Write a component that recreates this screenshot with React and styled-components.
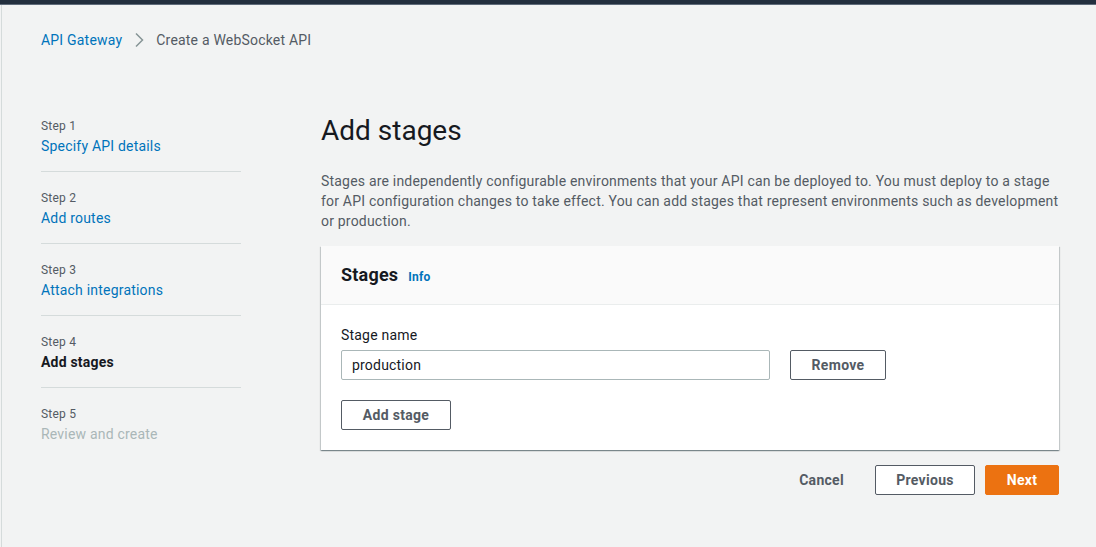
import React from "react";
import styled, { createGlobalStyle } from "styled-components";

const GlobalStyle = createGlobalStyle`
  html, body {
    margin: 0;
    padding: 0;
    background: #f2f3f3;
    font-family: Roboto, "Open Sans", "Liberation Sans", sans-serif;
    color: #16191f;
    font-size: 14px;
    letter-spacing: 0.2px;
  }
`;

const TopBar = styled.div`
  height: 4px;
  background: #232f3e;
  border-bottom: 1px solid #5f6b7a;
`;

const Shell = styled.div`
  margin-left: 1px;
  border-left: 1px solid #d5dbdb;
  min-height: 542px;
  padding: 25px 0 0 39px;
  box-sizing: border-box;
`;

const Breadcrumbs = styled.nav`
  display: flex;
  align-items: center;
  gap: 9px;
  line-height: 20px;
`;

const Crumb = styled.span`
  color: ${(p) => (p.$link ? "#0073bb" : "#545b64")};
`;

const Layout = styled.div`
  display: grid;
  grid-template-columns: 200px 738px;
  column-gap: 80px;
  margin-top: 50px;
`;

const StepList = styled.ol`
  list-style: none;
  margin: 0;
  padding: 0;
`;

const StepItem = styled.li`
  padding: 18px 0 15px;
  border-top: 1px solid #d5dbdb;
  display: flex;
  flex-direction: column;
  gap: 2px;

  &:first-child {
    border-top: none;
  }
`;

const StepLabel = styled.span`
  font-size: 12px;
  line-height: 16px;
  color: #545b64;
`;

const StepName = styled.span`
  font-size: 14px;
  line-height: 20px;
  color: ${(p) =>
    p.$state === "current" ? "#16191f" : p.$state === "disabled" ? "#aab7b8" : "#0073bb"};
  font-weight: ${(p) => (p.$state === "current" ? 700 : 400)};
`;

const Main = styled.main`
  display: flex;
  flex-direction: column;
  padding-top: 13px;
`;

const Title = styled.h1`
  margin: 0;
  font-size: 28px;
  line-height: 36px;
  font-weight: 400;
  letter-spacing: 0;
  color: #16191f;
`;

const Description = styled.p`
  margin: 22px 0 0;
  font-size: 14px;
  line-height: 20px;
  color: #545b64;
`;

const Container = styled.section`
  margin-top: 15px;
  background: #fff;
  box-shadow: 0 1px 1px 0 rgba(0, 28, 36, 0.3), 1px 1px 1px 0 rgba(0, 28, 36, 0.15),
    -1px 1px 1px 0 rgba(0, 28, 36, 0.15);
`;

const ContainerHeader = styled.header`
  display: flex;
  align-items: baseline;
  gap: 10px;
  padding: 18px 20px;
  background: #fafafa;
  border-bottom: 1px solid #eaeded;
`;

const ContainerTitle = styled.h2`
  margin: 0;
  font-size: 18px;
  line-height: 22px;
  font-weight: 700;
`;

const InfoLink = styled.span`
  font-size: 12px;
  font-weight: 700;
  color: #0073bb;
`;

const ContainerBody = styled.div`
  padding: 19px 20px 20px;
  display: flex;
  flex-direction: column;
  align-items: flex-start;
`;

const FieldLabel = styled.label`
  font-size: 14px;
  line-height: 22px;
  margin-bottom: 4px;
`;

const FieldRow = styled.div`
  display: flex;
  gap: 20px;
  margin-bottom: 20px;
`;

const TextInput = styled.input`
  width: 429px;
  height: 30px;
  box-sizing: border-box;
  padding: 0 10px;
  border: 1px solid #aab7b8;
  border-radius: 2px;
  font: inherit;
  font-size: 14px;
  letter-spacing: 0.2px;
  color: #16191f;
  background: #fff;
`;

const Button = styled.button`
  height: 30px;
  box-sizing: border-box;
  width: ${(p) => p.$width || "auto"};
  padding: 0 20px;
  font-family: inherit;
  font-size: 14px;
  font-weight: 700;
  letter-spacing: 0.3px;
  border-radius: 2px;
  cursor: pointer;
  border: 1px solid ${(p) => (p.$variant === "primary" ? "#ec7211" : p.$variant === "link" ? "transparent" : "#545b64")};
  background: ${(p) => (p.$variant === "primary" ? "#ec7211" : p.$variant === "link" ? "transparent" : "#fff")};
  color: ${(p) => (p.$variant === "primary" ? "#fff" : "#545b64")};
`;

const Actions = styled.div`
  display: flex;
  justify-content: flex-end;
  align-items: center;
  gap: 10px;
  margin-top: 15px;
`;

const Chevron = () => (
  <svg width="16" height="16" viewBox="0 0 16 16" fill="none">
    <path d="M5 1.5l6.5 6.5L5 14.5" stroke="#879596" strokeWidth="1.5" />
  </svg>
);

const steps = [
  { n: 1, name: "Specify API details", state: "done" },
  { n: 2, name: "Add routes", state: "done" },
  { n: 3, name: "Attach integrations", state: "done" },
  { n: 4, name: "Add stages", state: "current" },
  { n: 5, name: "Review and create", state: "disabled" },
];

export default function App() {
  return (
    <>
      <GlobalStyle />
      <TopBar />
      <Shell>
        <Breadcrumbs>
          <Crumb $link>API Gateway</Crumb>
          <Chevron />
          <Crumb>Create a WebSocket API</Crumb>
        </Breadcrumbs>
        <Layout>
          <StepList>
            {steps.map((s) => (
              <StepItem key={s.n}>
                <StepLabel>Step {s.n}</StepLabel>
                <StepName $state={s.state}>{s.name}</StepName>
              </StepItem>
            ))}
          </StepList>
          <Main>
            <Title>Add stages</Title>
            <Description>
              Stages are independently configurable environments that your API can be deployed to. You must deploy to a stage
              for API configuration changes to take effect. You can add stages that represent environments such as development
              or production.
            </Description>
            <Container>
              <ContainerHeader>
                <ContainerTitle>Stages</ContainerTitle>
                <InfoLink>Info</InfoLink>
              </ContainerHeader>
              <ContainerBody>
                <FieldLabel>Stage name</FieldLabel>
                <FieldRow>
                  <TextInput defaultValue="production" />
                  <Button $width="96px">Remove</Button>
                </FieldRow>
                <Button $width="110px">Add stage</Button>
              </ContainerBody>
            </Container>
            <Actions>
              <Button $variant="link">Cancel</Button>
              <Button $width="100px">Previous</Button>
              <Button $variant="primary" $width="74px">Next</Button>
            </Actions>
          </Main>
        </Layout>
      </Shell>
    </>
  );
}
